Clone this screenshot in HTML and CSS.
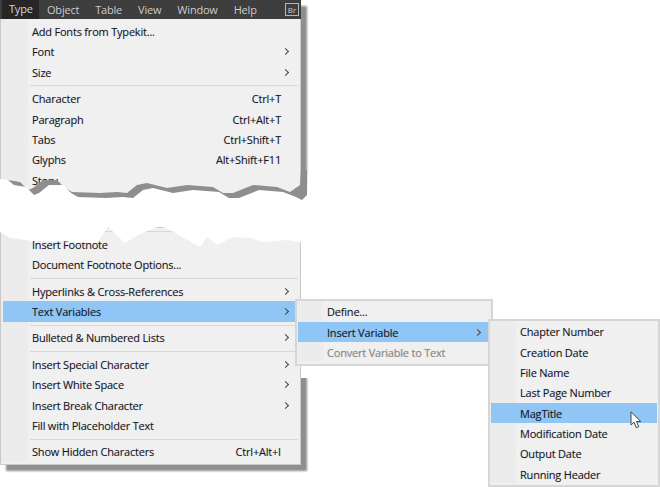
FILE: index.html
```html
<!DOCTYPE html>
<html lang="en">
<head>
<meta charset="utf-8">
<title>Type menu</title>
<link rel="stylesheet" href="styles.css">
</head>
<body>
<div class="stage">
  <div class="top">
    <nav class="bar">
      <span class="bar-item active">Type</span>
      <span class="bar-item">Object</span>
      <span class="bar-item">Table</span>
      <span class="bar-item">View</span>
      <span class="bar-item">Window</span>
      <span class="bar-item">Help</span>
      <span class="br">Br</span>
    </nav>
    <div class="menu menu-top">
      <div class="row"><span class="label">Add Fonts from Typekit...</span></div>
      <div class="row"><span class="label">Font</span><i class="arrow"></i></div>
      <div class="row"><span class="label">Size</span><i class="arrow"></i></div>
      <div class="sep"></div>
      <div class="row"><span class="label">Character</span><span class="key">Ctrl+T</span></div>
      <div class="row"><span class="label">Paragraph</span><span class="key">Ctrl+Alt+T</span></div>
      <div class="row"><span class="label">Tabs</span><span class="key">Ctrl+Shift+T</span></div>
      <div class="row"><span class="label">Glyphs</span><span class="key">Alt+Shift+F11</span></div>
      <div class="row"><span class="label">Story</span></div>
      <div class="row"></div>
    </div>
  </div>

  <div class="menu menu-bottom">
    <div class="sep"></div>
    <div class="row"><span class="label">Insert Footnote</span></div>
    <div class="row"><span class="label">Document Footnote Options...</span></div>
    <div class="sep"></div>
    <div class="row"><span class="label">Hyperlinks &amp; Cross-References</span><i class="arrow"></i></div>
    <div class="row hot"><span class="label">Text Variables</span><i class="arrow"></i></div>
    <div class="sep"></div>
    <div class="row"><span class="label">Bulleted &amp; Numbered Lists</span><i class="arrow"></i></div>
    <div class="sep"></div>
    <div class="row"><span class="label">Insert Special Character</span><i class="arrow"></i></div>
    <div class="row"><span class="label">Insert White Space</span><i class="arrow"></i></div>
    <div class="row"><span class="label">Insert Break Character</span><i class="arrow"></i></div>
    <div class="row"><span class="label">Fill with Placeholder Text</span></div>
    <div class="sep"></div>
    <div class="row"><span class="label">Show Hidden Characters</span><span class="key">Ctrl+Alt+I</span></div>
  </div>

  <svg class="tear" width="330" height="90" viewBox="0 170 330 90" aria-hidden="true">
    <path class="tear-shadow" d="M8 180L20 182L28 190L33 188L43 180L57 180L65 188L72 192L100 193L117 192L127 193L137 185L147 183L167 188L187 185L213 187L223 193L233 193L253 185L277 187L290 192L300 185L301 170L307 170L307 210L8 210Z"/>
    <path class="tear-white" d="M0 179L8 180L14 185L26 187L34 195L39 193L49 185L63 185L71 193L78 197L106 198L123 197L133 198L143 190L153 188L173 193L193 190L219 192L229 198L239 198L259 190L283 192L296 197L302 200L307 195L308 170L330 170L330 240L300 242L287 240L263 242L250 238L233 237L217 245L207 237L200 247L170 230L160 226L140 234L125 243L108 227L97 243L90 243L60 241L33 241L10 238L0 232Z"/>
  </svg>

  <div class="menu sub sub-one">
    <div class="row"><span class="label">Define...</span></div>
    <div class="row hot"><span class="label">Insert Variable</span><i class="arrow"></i></div>
    <div class="row off"><span class="label">Convert Variable to Text</span></div>
  </div>

  <div class="menu sub sub-two">
    <div class="row"><span class="label">Chapter Number</span></div>
    <div class="row"><span class="label">Creation Date</span></div>
    <div class="row"><span class="label">File Name</span></div>
    <div class="row"><span class="label">Last Page Number</span></div>
    <div class="row hot"><span class="label">MagTitle</span></div>
    <div class="row"><span class="label">Modification Date</span></div>
    <div class="row"><span class="label">Output Date</span></div>
    <div class="row"><span class="label">Running Header</span></div>
  </div>

  <svg class="cursor" width="13" height="18" viewBox="0 0 13 18" aria-hidden="true">
    <path d="M1 .8V14L4 11.2L6.300 16.700L8.800 15.700L6.500 10.500H10.800Z"/>
  </svg>
</div>
</body>
</html>
```
FILE: styles.css
```css
* { box-sizing: border-box; }
html, body { margin: 0; background: #fff; }
body { font-family: "Open Sans", "Noto Sans", sans-serif; font-size: 11px; letter-spacing: -0.2px; color: #14141e; text-shadow: 0 0 1px rgba(20, 20, 40, .22); }
.stage { position: relative; width: 660px; height: 487px; overflow: hidden; }

.top { width: 301px; box-shadow: 6px 6px 2px #8e8e8e; }
.bar { display: flex; align-items: center; height: 19px; background: #3e3e3e; color: #cfcfcf; padding-left: 2px; }
.bar-item { padding: 0 8px; line-height: 18px; }
.active { background: #262626; color: #d8d8d8; padding-left: 7px; height: 19px; width: 37px; }
.br { margin-left: auto; margin-right: 2px; width: 14px; height: 13px; border: 1px solid #b5b5b5; font-size: 8px; line-height: 11px; text-align: center; color: #d0d0d0; letter-spacing: 0; }

.menu { background: #f0f0f0; border: 1px solid #c9c9c9; padding: 2px; position: relative; }
.menu-top { border-top: 0; padding-top: 2.500px; }
.menu-bottom { width: 301px; margin-top: 13.300px; padding-top: 0; box-shadow: 6px 6px 2px #8e8e8e; clip-path: polygon(0 0, 301px 0, 301px 151px, 320px 151px, 320px 270px, 0 270px); }
.menu::before { content: ""; position: absolute; left: 0; top: 0; bottom: 2px; width: 27px; background: #ececec; }

.row { position: relative; display: flex; align-items: center; height: 20.340px; padding: 0 10px 0 29px; white-space: nowrap; }
.label { flex: 1; }
.key { margin-right: 7px; }
.arrow { width: 5px; height: 5px; border-top: 1px solid #444; border-right: 1px solid #444; transform: rotate(45deg); }
.sep { position: relative; height: 6.200px; padding-top: 3px; margin-left: 27px; }
.sep::after { content: ""; display: block; height: 1px; background: #d8d8d8; }
.hot { background: #8fc6f6; }
.off { color: #8a8a8a; }

.sub { position: absolute; padding: 0.600px 2px 0; border: 2px solid #d6d6d6; }
.sub::before { width: 26px; }
.sub .row { padding-left: 29px; margin-left: -1px; margin-right: -1px; }
.sub-one { left: 295px; top: 299px; width: 198px; height: 67px; }
.sub-two { left: 488px; top: 319px; width: 172px; height: 168px; }

.tear { position: absolute; left: 0; top: 170px; }
.tear-shadow { fill: #8e8e8e; }
.tear-white { fill: #fff; }

.cursor { position: absolute; left: 630px; top: 411px; }
.cursor path { fill: #fff; stroke: #444; stroke-width: 1; }
```
